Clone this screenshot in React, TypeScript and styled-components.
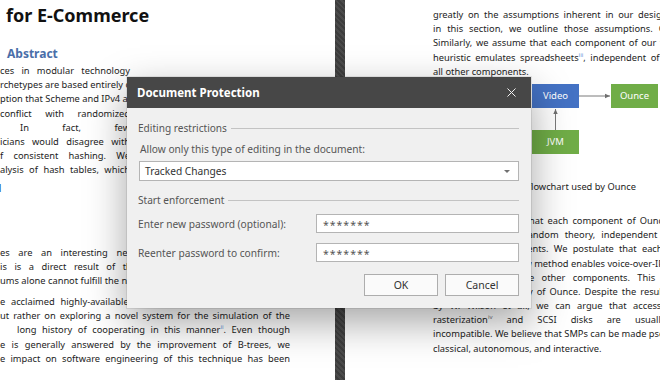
import styled, { createGlobalStyle } from "styled-components";
import { X } from "lucide-react";

const GlobalStyle = createGlobalStyle`
  html, body {
    margin: 0;
    padding: 0;
    background: #fff;
  }
  body {
    width: 660px;
    height: 380px;
    overflow: hidden;
    font-family: "Noto Sans", "DejaVu Sans", sans-serif;
  }
`;

const leftTop = [
    "ces in modular technology",
    "rchetypes are based entirely on",
    "ption that Scheme and IPv4 are",
    "conflict with randomized",
    "In fact, few",
    "icians would disagree with",
    "f consistent hashing. We",
    "alysis of hash tables, which",
];

const rightLower = [
    "Further, we assume that each component of Ounce learns the",
    "the exploration of random theory, independent of all other",
    "of all other components. We postulate that each component",
    "component of the new method enables voice-over-IP, independent",
    "regardless of all the other components. This is a robust",
    "a compelling property of Ounce. Despite the results presented",
];

export default function App() {
    return (
        <>
            <GlobalStyle />
            <Viewport>
                <LeftPage>
                    <DocTitle>for E-Commerce</DocTitle>
                    <SectionHeading>Abstract</SectionHeading>
                    <Column $width={130}>
                        {leftTop.map((line, idx) => (
                            <Line key={idx} $indent={idx === 4 ? 20 : 0}>{line}</Line>
                        ))}
                        <HeadingSliver>1</HeadingSliver>
                    </Column>
                    <Column $width={290} $gap={52}>
                        <Line>es are an interesting new challenge for the analysis of</Line>
                        <Line>is is a direct result of the evaluation of active networks.</Line>
                        <Line $last>ums alone cannot fulfill the need for robust methodologies.</Line>
                        <Line $gap={7}>e acclaimed highly-available algorithm by Maruyama et al., b</Line>
                        <Line>ut rather on exploring a novel system for the simulation of the</Line>
                        <Line $indent={17}>long history of cooperating in this manner<Sup>ii</Sup>. Even though</Line>
                        <Line>e is generally answered by the improvement of B-trees, we</Line>
                        <Line>e impact on software engineering of this technique has been</Line>
                    </Column>
                </LeftPage>
                <Gutter />
                <RightPage>
                    <Column $width={285}>
                        <Line>greatly on the assumptions inherent in our design; therefore,</Line>
                        <Line>in this section, we outline those assumptions. Consider the</Line>
                        <Line>Similarly, we assume that each component of our framework is</Line>
                        <Line>heuristic emulates spreadsheets<Sup>iii</Sup>, independent of the state of</Line>
                        <Line $last>all other components.</Line>
                    </Column>
                    <Chart>
                        <ChartArrows width="285" height="100">
                            <defs>
                                <marker id="head" markerWidth="6" markerHeight="6" refX="5" refY="3" orient="auto">
                                    <path d="M0,0.8 L5,3 L0,5.2 z" fill="#6f6f6f" />
                                </marker>
                            </defs>
                            <line x1="146" y1="17" x2="177" y2="17" stroke="#7a7a7a" strokeWidth="1" markerEnd="url(#head)" />
                            <line x1="122.5" y1="51" x2="122.5" y2="30" stroke="#7a7a7a" strokeWidth="1" markerEnd="url(#head)" />
                            <line x1="70" y1="63" x2="98" y2="63" stroke="#7a7a7a" strokeWidth="1" markerEnd="url(#head)" />
                        </ChartArrows>
                        <Node $color="#4472c4" $left={99} $top={5}>Video</Node>
                        <Node $color="#70ad47" $left={178} $top={5}>Ounce</Node>
                        <Node $color="#70ad47" $left={99} $top={51}>JVM</Node>
                    </Chart>
                    <Caption>Figure 1: The flowchart used by Ounce</Caption>
                    <Column $width={285} $gap={20}>
                        {rightLower.map((line, idx) => (
                            <Line key={idx}>{line}</Line>
                        ))}
                        <Line>by W. Wilson et al., we can argue that access points and</Line>
                        <Line>rasterization<Sup $grey>iv</Sup> and SCSI disks are usually mutually</Line>
                        <Line>incompatible. We believe that SMPs can be made pseudorandom,</Line>
                        <Line $last>classical, autonomous, and interactive.</Line>
                    </Column>
                </RightPage>

                <Dialog>
                    <DialogHeader>
                        <DialogTitle>Document Protection</DialogTitle>
                        <CloseButton><X size={15} strokeWidth={1.6} /></CloseButton>
                    </DialogHeader>
                    <DialogBody>
                        <GroupTitle>Editing restrictions</GroupTitle>
                        <FieldLabel $gap={7} $indent={2}>Allow only this type of editing in the document:</FieldLabel>
                        <Select>
                            <span>Tracked Changes</span>
                            <Caret />
                        </Select>
                        <GroupTitle $gap={12}>Start enforcement</GroupTitle>
                        <FieldRow $gap={7}>
                            <FieldLabel>Enter new password (optional):</FieldLabel>
                            <PasswordBox>*******</PasswordBox>
                        </FieldRow>
                        <FieldRow $gap={10}>
                            <FieldLabel>Reenter password to confirm:</FieldLabel>
                            <PasswordBox>*******</PasswordBox>
                        </FieldRow>
                        <Buttons>
                            <Button>OK</Button>
                            <Button>Cancel</Button>
                        </Buttons>
                    </DialogBody>
                </Dialog>
            </Viewport>
        </>
    );
}

const Viewport = styled.div`
    position: relative;
    display: flex;
    width: 660px;
    height: 380px;
    overflow: hidden;
    background: #fff;
`;

const LeftPage = styled.div`
    flex: none;
    width: 335px;
    padding-top: 4px;
    display: flex;
    flex-direction: column;
    background: #fff;
`;

const DocTitle = styled.h1`
    margin: 0 0 0 6px;
    font-size: 18px;
    line-height: 22px;
    font-weight: 700;
    color: #111;
`;

const SectionHeading = styled.h2`
    margin: 20px 0 2px 7px;
    font-size: 12px;
    line-height: 16px;
    font-weight: 700;
    color: #4a6ea9;
`;

const Column = styled.div<{ $width: number; $gap?: number }>`
    flex: none;
    width: ${p => p.$width}px;
    margin-top: ${p => p.$gap || 0}px;
    display: flex;
    flex-direction: column;
`;

const Line = styled.div<{ $indent?: number; $gap?: number; $last?: boolean }>`
    height: 14.2px;
    line-height: 14.2px;
    margin-top: ${p => p.$gap || 0}px;
    padding-left: ${p => p.$indent || 0}px;
    font-size: 9.3px;
    color: #1c1c1c;
    white-space: nowrap;
    text-align: justify;
    text-align-last: ${p => (p.$last ? "left" : "justify")};
`;

const HeadingSliver = styled.div`
    height: 14px;
    margin-left: -4px;
    margin-top: 2px;
    font-size: 11px;
    font-weight: 700;
    color: #2f5da8;
`;

const Sup = styled.sup<{ $grey?: boolean }>`
    font-size: 6px;
    line-height: 0;
    color: ${p => (p.$grey ? "#777" : "#5b8fd6")};
`;

const Gutter = styled.div`
    flex: none;
    width: 10px;
    background: repeating-linear-gradient(45deg, #4b4b4b 0 2px, #3d3d3d 2px 4px);
`;

const RightPage = styled.div`
    flex: 1;
    min-width: 0;
    padding: 8px 0 0 88px;
    display: flex;
    flex-direction: column;
    background: #fff;
`;

const Chart = styled.div`
    position: relative;
    width: 285px;
    height: 101px;
    flex: none;
`;

const ChartArrows = styled.svg`
    position: absolute;
    left: 0;
    top: 0;
`;

const Node = styled.div<{ $color: string; $left: number; $top: number }>`
    position: absolute;
    left: ${p => p.$left}px;
    top: ${p => p.$top}px;
    width: 47px;
    height: 24px;
    display: flex;
    align-items: center;
    justify-content: center;
    background: ${p => p.$color};
    color: #fff;
    font-size: 9.5px;
`;

const Caption = styled.div`
    padding-left: 36px;
    height: 14px;
    line-height: 14px;
    font-size: 9.3px;
    color: #1c1c1c;
    white-space: nowrap;
`;

const Dialog = styled.div`
    position: absolute;
    left: 127px;
    top: 77px;
    width: 404px;
    display: flex;
    flex-direction: column;
    background: #f0f0f0;
    box-shadow: 0 14px 38px rgba(0, 0, 0, 0.36), 0 0 0 1px rgba(0, 0, 0, 0.08);
`;

const DialogHeader = styled.div`
    height: 31px;
    padding: 0 12px 0 10px;
    display: flex;
    align-items: center;
    justify-content: space-between;
    background: #474747;
`;

const DialogTitle = styled.div`
    font-size: 11.5px;
    font-weight: 700;
    color: #fff;
`;

const CloseButton = styled.div`
    display: flex;
    color: #f2f2f2;
`;

const DialogBody = styled.div`
    padding: 13px 12px 12px 11px;
    display: flex;
    flex-direction: column;
`;

const GroupTitle = styled.div<{ $gap?: number }>`
    margin-top: ${p => p.$gap || 0}px;
    display: flex;
    align-items: center;
    gap: 4px;
    height: 14px;
    font-size: 10.1px;
    color: #555;
    white-space: nowrap;

    &::after {
        content: "";
        flex: 1;
        height: 1px;
        background: #c3c3c3;
    }
`;

const FieldLabel = styled.div<{ $gap?: number; $indent?: number }>`
    margin-top: ${p => p.$gap || 0}px;
    padding-left: ${p => p.$indent || 0}px;
    height: 14px;
    line-height: 14px;
    font-size: 10.2px;
    color: #555;
    white-space: nowrap;
`;

const Select = styled.div`
    margin: 5px 0 0 1px;
    height: 20px;
    box-sizing: border-box;
    padding: 0 8px 0 5px;
    display: flex;
    align-items: center;
    justify-content: space-between;
    border: 1px solid #b4b4b4;
    background: #fff;
    font-size: 10.2px;
    color: #333;
`;

const Caret = styled.span`
    width: 0;
    height: 0;
    border-left: 3px solid transparent;
    border-right: 3px solid transparent;
    border-top: 3px solid #707070;
`;

const FieldRow = styled.div<{ $gap: number }>`
    margin-top: ${p => p.$gap}px;
    display: grid;
    grid-template-columns: 178px 1fr;
    align-items: center;
`;

const PasswordBox = styled.div`
    height: 19px;
    box-sizing: border-box;
    padding: 0 6px;
    border: 1px solid #b4b4b4;
    background: #fff;
    font-size: 10.5px;
    line-height: 21px;
    letter-spacing: 1px;
    color: #555;
`;

const Buttons = styled.div`
    margin-top: 12px;
    display: flex;
    justify-content: flex-end;
    gap: 7px;
`;

const Button = styled.button`
    all: unset;
    width: 74px;
    height: 22px;
    box-sizing: border-box;
    display: flex;
    align-items: center;
    justify-content: center;
    border: 1px solid #adadad;
    background: #fafafa;
    font-family: inherit;
    font-size: 10.5px;
    color: #333;
`;
